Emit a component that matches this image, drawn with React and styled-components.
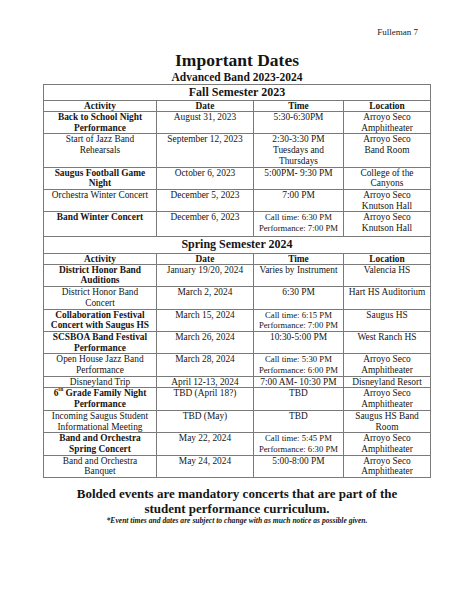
import styled, { createGlobalStyle } from 'styled-components';

const GlobalStyle = createGlobalStyle`
  html, body {
    margin: 0;
    padding: 0;
    background: #ffffff;
  }
  body {
    font-family: 'Liberation Serif', 'Times New Roman', serif;
    color: #151515;
  }
`;

const Page = styled.div`
  width: 474px;
  height: 613px;
  padding-top: 27px;
  box-sizing: border-box;
  overflow: hidden;
`;

const PageNumber = styled.div`
  font-size: 9px;
  line-height: 11px;
  text-align: right;
  padding-right: 56px;
  color: #222;
`;

const Title = styled.h1`
  margin: 11.5px 0 0;
  font-size: 17.5px;
  line-height: 20px;
  font-weight: 700;
  text-align: center;
`;

const Subtitle = styled.h2`
  margin: 1px 0 0;
  font-size: 11.5px;
  line-height: 13px;
  font-weight: 700;
  text-align: center;
`;

const Table = styled.table`
  width: 387px;
  margin: 0 auto;
  border-collapse: collapse;
  table-layout: fixed;
  border: 1.5px solid #6b6b6b;
`;

const SemesterCell = styled.th`
  font-size: 12px;
  line-height: 15.5px;
  font-weight: 700;
  text-align: center;
  padding: 0;
  border: 1px solid #7a7a7a;
`;

const HeadCell = styled.th`
  font-size: 9.4px;
  line-height: 10px;
  font-weight: 700;
  text-align: center;
  padding: 0 2px;
  border: 1px solid #7a7a7a;
`;

const Cell = styled.td`
  font-size: ${({ $small }) => ($small ? '8.7px' : '9.4px')};
  line-height: ${({ $small }) => ($small ? '10.3px' : '10.7px')};
  font-weight: ${({ $bold }) => ($bold ? 700 : 400)};
  text-align: center;
  vertical-align: top;
  white-space: pre-line;
  padding: 0 1px ${({ $extra }) => ($extra ? '2.5px' : '0')};
  border: 1px solid #7a7a7a;
  overflow: hidden;
`;

const Sup = styled.sup`
  font-size: 5.5px;
  line-height: 0;
  vertical-align: top;
  position: relative;
  top: 1px;
`;

const Footer = styled.div`
  margin-top: 8px;
  text-align: center;
`;

const Notice = styled.p`
  margin: 0 auto;
  width: 340px;
  font-size: 13px;
  line-height: 15px;
  font-weight: 700;
`;

const Disclaimer = styled.p`
  margin: 0;
  font-size: 7.6px;
  line-height: 9px;
  font-weight: 700;
  font-style: italic;
`;

const fall = [
  {
    activity: 'Back to School Night\nPerformance',
    bold: true,
    date: 'August 31, 2023',
    time: '5:30-6:30PM',
    location: 'Arroyo Seco\nAmphitheater',
  },
  {
    activity: 'Start of Jazz Band\nRehearsals',
    date: 'September 12, 2023',
    time: '2:30-3:30 PM\nTuesdays and\nThursdays',
    location: 'Arroyo Seco\nBand Room',
  },
  {
    activity: 'Saugus Football Game\nNight',
    bold: true,
    date: 'October 6, 2023',
    time: '5:00PM- 9:30 PM',
    location: 'College of the\nCanyons',
  },
  {
    activity: 'Orchestra Winter Concert',
    date: 'December 5, 2023',
    time: '7:00 PM',
    location: 'Arroyo Seco\nKnutson Hall',
  },
  {
    activity: 'Band Winter Concert',
    bold: true,
    date: 'December 6, 2023',
    time: 'Call time: 6:30 PM\nPerformance: 7:00 PM',
    smallTime: true,
    location: 'Arroyo Seco\nKnutson Hall',
    extra: true,
  },
];

const spring = [
  {
    activity: 'District Honor Band\nAuditions',
    bold: true,
    date: 'January 19/20, 2024',
    time: 'Varies by Instrument',
    location: 'Valencia HS',
  },
  {
    activity: 'District Honor Band\nConcert',
    date: 'March 2, 2024',
    time: '6:30 PM',
    location: 'Hart HS Auditorium',
  },
  {
    activity: 'Collaboration Festival\nConcert with Saugus HS',
    bold: true,
    date: 'March 15, 2024',
    time: 'Call time: 6:15 PM\nPerformance: 7:00 PM',
    smallTime: true,
    location: 'Saugus HS',
  },
  {
    activity: 'SCSBOA Band Festival\nPerformance',
    bold: true,
    date: 'March 26, 2024',
    time: '10:30-5:00 PM',
    location: 'West Ranch HS',
  },
  {
    activity: 'Open House Jazz Band\nPerformance',
    date: 'March 28, 2024',
    time: 'Call time: 5:30 PM\nPerformance: 6:00 PM',
    smallTime: true,
    location: 'Arroyo Seco\nAmphitheater',
  },
  {
    activity: 'Disneyland Trip',
    date: 'April 12-13, 2024',
    time: '7:00 AM- 10:30 PM',
    location: 'Disneyland Resort',
  },
  {
    activity: (
      <>
        6<Sup>th</Sup> Grade Family Night{'\n'}Performance
      </>
    ),
    bold: true,
    date: 'TBD (April 18?)',
    time: 'TBD',
    location: 'Arroyo Seco\nAmphitheater',
  },
  {
    activity: 'Incoming Saugus Student\nInformational Meeting',
    date: 'TBD (May)',
    time: 'TBD',
    location: 'Saugus HS Band\nRoom',
  },
  {
    activity: 'Band and Orchestra\nSpring Concert',
    bold: true,
    date: 'May 22, 2024',
    time: 'Call time: 5:45 PM\nPerformance: 6:30 PM',
    smallTime: true,
    location: 'Arroyo Seco\nAmphitheater',
  },
  {
    activity: 'Band and Orchestra\nBanquet',
    date: 'May 24, 2024',
    time: '5:00-8:00 PM',
    location: 'Arroyo Seco\nAmphitheater',
  },
];

function Semester({ title, events }) {
  return (
    <>
      <tr>
        <SemesterCell colSpan={4}>{title}</SemesterCell>
      </tr>
      <tr>
        <HeadCell>Activity</HeadCell>
        <HeadCell>Date</HeadCell>
        <HeadCell>Time</HeadCell>
        <HeadCell>Location</HeadCell>
      </tr>
      {events.map((ev, i) => (
        <tr key={i}>
          <Cell $bold={ev.bold} $extra={ev.extra}>
            {ev.activity}
          </Cell>
          <Cell $extra={ev.extra}>{ev.date}</Cell>
          <Cell $small={ev.smallTime} $extra={ev.extra}>
            {ev.time}
          </Cell>
          <Cell $extra={ev.extra}>{ev.location}</Cell>
        </tr>
      ))}
    </>
  );
}

export default function App() {
  return (
    <>
      <GlobalStyle />
      <Page>
        <PageNumber>Fulleman 7</PageNumber>
        <Title>Important Dates</Title>
        <Subtitle>Advanced Band 2023-2024</Subtitle>
        <Table>
          <colgroup>
            <col style={{ width: 113 }} />
            <col style={{ width: 97 }} />
            <col style={{ width: 90 }} />
            <col style={{ width: 87 }} />
          </colgroup>
          <tbody>
            <Semester title="Fall Semester 2023" events={fall} />
            <Semester title="Spring Semester 2024" events={spring} />
          </tbody>
        </Table>
        <Footer>
          <Notice>
            Bolded events are mandatory concerts that are part of the student
            performance curriculum.
          </Notice>
          <Disclaimer>
            *Event times and dates are subject to change with as much notice as
            possible given.
          </Disclaimer>
        </Footer>
      </Page>
    </>
  );
}
